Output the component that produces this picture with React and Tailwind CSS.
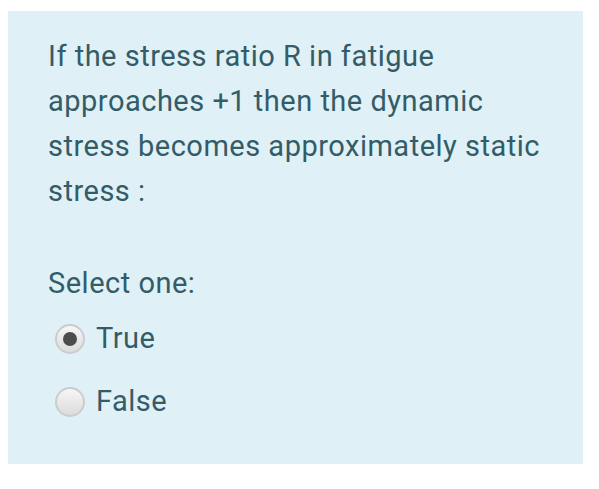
// Quiz question card with a single-choice True/False answer
function Radio({ checked }) {
  return (
    <span className="relative flex h-[30px] w-[30px] shrink-0 items-center justify-center rounded-full border-2 border-[#c9cdd0] bg-gradient-to-b from-[#f6f6f6] to-[#dcdcdc]">
      {checked && <span className="h-[14px] w-[14px] rounded-full bg-[#4a4c4e]" />}
    </span>
  );
}

function Option({ label, checked }) {
  return (
    <label className="flex items-center gap-[11px]">
      <Radio checked={checked} />
      <span>{label}</span>
    </label>
  );
}

export default function App() {
  return (
    <div className="h-[489px] w-[599px] bg-white pl-[8px] pt-[11px]" style={{ fontFamily: "Roboto, 'Noto Sans', sans-serif" }}>
      <div className="h-[453px] w-[575px] bg-[#dff0f7] pl-[40px] pr-[30px] pt-[23px] text-[29px] leading-[45px] tracking-[0.5px] text-[#335c67]">
        <p>
          If the stress ratio R in fatigue approaches +1 then the dynamic stress becomes approximately static
          stress :
        </p>

        <p className="mt-[47px]">Select one:</p>

        <div className="mt-[10px] flex flex-col gap-[18px] pl-[7px]">
          <Option label="True" checked />
          <Option label="False" />
        </div>
      </div>
    </div>
  );
}
